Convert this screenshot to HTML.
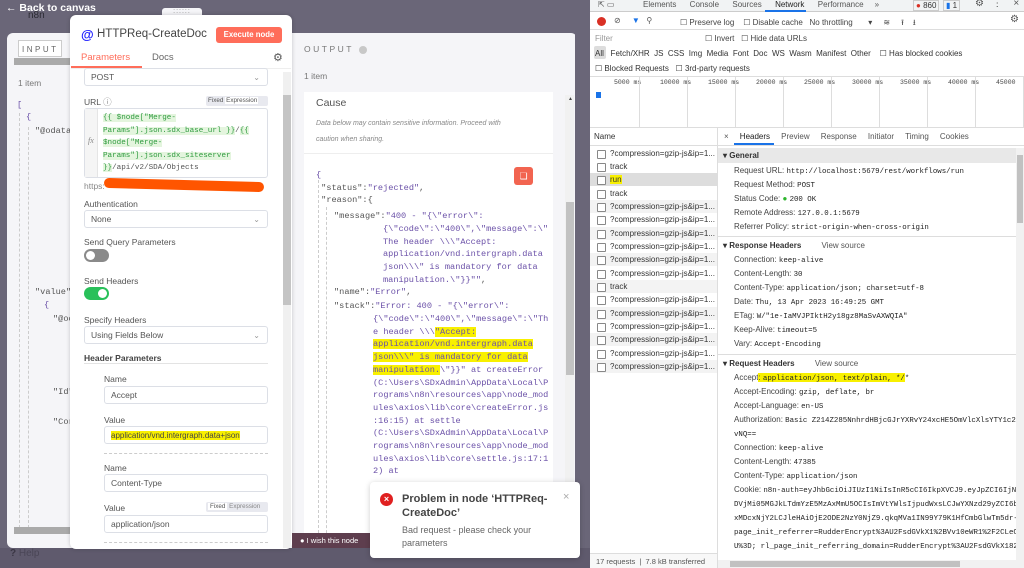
<!DOCTYPE html>
<html><head><meta charset="utf-8"><style>
*{margin:0;padding:0;box-sizing:border-box}
html,body{width:1024px;height:568px;overflow:hidden}
body{position:relative;background:#6a6678;font-family:"Liberation Sans",sans-serif}
.a{position:absolute;white-space:nowrap}
.m{font-family:"Liberation Mono",monospace}
.lbl{font-size:8.5px;color:#555}
.inp{position:absolute;background:#fff;border:1px solid #dcdfe6;border-radius:3px;font-size:8.5px;color:#555;padding-left:6px;display:flex;align-items:center}
.chev{position:absolute;right:7px;top:4px;font-size:8px;color:#999}
.code{font-family:"Liberation Mono",monospace;font-size:8.6px;color:#555;position:absolute;white-space:nowrap}
.s{color:#6b51a8}
.hl{background:#f8f000}
.dt{font-size:8px;color:#333;position:absolute;white-space:nowrap}
.dv{font-family:"Liberation Mono",monospace;font-size:7.4px;color:#222}
.ln{height:14px;line-height:14px;white-space:nowrap;overflow:hidden}
.row{position:absolute;left:590px;width:127px;height:13px;font-size:8px;color:#333;padding-left:20px;line-height:13px;white-space:nowrap;overflow:hidden;text-overflow:ellipsis}
.row:before{content:"";position:absolute;left:7px;top:3px;width:7px;height:7px;border:1px solid #888;border-radius:1px;background:#fff}
.alt{background:#f3f3f3}
</style></head><body>
<div class="a" style="left:6px;top:2px;color:#fff;font-size:10.5px;font-weight:bold">&#8592; Back to canvas</div>
<div class="a" style="left:28px;top:10px;color:#2b2b33;font-size:10px">n8n</div>
<div class="a" style="left:7px;top:33px;width:570px;height:515px;background:#f5f5f8;border-radius:6px"></div>
<div class="a" style="left:18px;top:40px;width:44px;height:17px;border:1px solid #ccc;background:#fff;font-size:8px;letter-spacing:2.5px;color:#666;padding:4px 0 0 3px">INPUT</div>
<div class="a" style="left:14px;top:58px;width:60px;height:7px;background:#aaa"></div>
<div class="a" style="left:18px;top:78px;font-size:8.5px;color:#777">1 item</div>
<div class="code s" style="left:17px;top:100px">[</div>
<div class="code s" style="left:26px;top:112px">{</div>
<div class="code" style="left:35px;top:126px">"@odata</div>
<div class="code" style="left:35px;top:287px">"value"</div>
<div class="code s" style="left:44px;top:300px">{</div>
<div class="code" style="left:53px;top:314px">"@oc</div>
<div class="code" style="left:53px;top:387px">"Id"</div>
<div class="code" style="left:53px;top:417px">"Cor</div>
<div class="a" style="left:19px;top:113px;height:420px;border-left:1px dashed #ccc"></div>
<div class="a" style="left:28px;top:127px;height:406px;border-left:1px dashed #ccc"></div>
<div class="a" style="left:14px;top:527px;width:60px;height:7px;background:#aaa"></div>
<div class="a" style="left:0;top:548px;width:590px;height:20px;background:#5f5a6d"></div>
<div class="a" style="left:10px;top:548px;color:#3a3644;font-size:10px;font-weight:bold">? <span style="font-weight:normal;color:#4a4656">Help</span></div>
<div class="a" style="left:162px;top:8px;width:40px;height:12px;background:#f5f5f8;border-radius:3px 3px 0 0;font-size:7px;color:#888;text-align:center;letter-spacing:1px">::::::</div>
<div class="a" style="left:70px;top:15px;width:222px;height:534px;background:#fff;border-radius:6px;box-shadow:0 0 4px rgba(0,0,0,.2)"></div>
<div class="a" style="left:81px;top:27px;color:#1a1aff;font-size:13px;font-weight:bold">@</div>
<div class="a" style="left:97px;top:28px;color:#444;font-size:11.5px">HTTPReq-CreateDoc</div>
<div class="a" style="left:216px;top:27px;width:66px;height:16px;background:#ff6d5a;border-radius:3px;color:#fff;font-size:7.8px;font-weight:bold;text-align:center;line-height:16px">Execute node</div>
<div class="a" style="left:81px;top:52px;color:#ff6d5a;font-size:9.5px">Parameters</div>
<div class="a" style="left:152px;top:52px;color:#666;font-size:9.5px">Docs</div>
<div class="a" style="left:71px;top:66px;width:71px;height:2px;background:#ff6d5a"></div>
<div class="a" style="left:273px;top:51px;color:#555;font-size:11px">&#9881;</div>
<div class="a" style="left:71px;top:68px;width:220px;height:1px;background:#eee"></div>
<div class="a" style="left:283px;top:72px;width:8px;height:476px;background:#f0f0f0"></div>
<div class="a" style="left:283px;top:95px;width:8px;height:210px;background:#c4c4c4"></div>
<div class="inp" style="left:84px;top:68px;width:184px;height:18px">POST<span class="chev">&#8964;</span></div>
<div class="a lbl" style="left:84px;top:96px">URL <span style="color:#888">&#9432;</span></div>
<div class="a" style="left:206px;top:96px;width:62px;height:10px;background:#e8e9ef;border-radius:2px;font-size:6.3px;color:#555;padding:1px 0 0 2px">Fixed <span style="background:#fff;padding:0 1px">Expression</span></div>
<div class="a" style="left:84px;top:108px;width:184px;height:70px;border:1px solid #dcdfe6;border-radius:3px;background:#fff"></div>
<div class="a" style="left:85px;top:109px;width:13px;height:68px;background:#f5f5f5;border-right:1px solid #e5e5e5;font-size:8px;color:#888;font-style:italic;padding:27px 0 0 3px;font-family:'Liberation Serif',serif">fx</div>
<div class="a m" style="left:103px;top:112px;font-size:7.6px;line-height:12.5px;color:#2e9b3e"><span style="background:#e4f5de">{{ $node["Merge-</span><br><span style="background:#e4f5de">Params"].json.sdx_base_url }}</span><span style="color:#555">/</span><span style="background:#e4f5de">{{</span><br><span style="background:#e4f5de">$node["Merge-</span><br><span style="background:#e4f5de">Params"].json.sdx_siteserver</span><br><span style="background:#e4f5de">}}</span><span style="color:#555">/api/v2/SDA/Objects</span></div>
<div class="a lbl" style="left:84px;top:181px;color:#888">https:</div>
<div class="a" style="left:104px;top:180px;width:160px;height:10px;background:#ff5500;border-radius:6px;transform:rotate(1.5deg)"></div>
<div class="a lbl" style="left:84px;top:199px">Authentication</div>
<div class="inp" style="left:84px;top:210px;width:184px;height:18px">None<span class="chev">&#8964;</span></div>
<div class="a lbl" style="left:84px;top:237px">Send Query Parameters</div>
<div class="a" style="left:84px;top:249px;width:25px;height:13px;background:#8a8a8a;border-radius:7px"><div style="position:absolute;left:2px;top:2px;width:9px;height:9px;border-radius:50%;background:#fff"></div></div>
<div class="a lbl" style="left:84px;top:276px">Send Headers</div>
<div class="a" style="left:84px;top:287px;width:25px;height:13px;background:#29c05a;border-radius:7px"><div style="position:absolute;right:2px;top:2px;width:9px;height:9px;border-radius:50%;background:#fff"></div></div>
<div class="a lbl" style="left:84px;top:315px">Specify Headers</div>
<div class="inp" style="left:84px;top:326px;width:184px;height:18px">Using Fields Below<span class="chev">&#8964;</span></div>
<div class="a lbl" style="left:84px;top:353px;font-weight:bold;color:#444">Header Parameters</div>
<div class="a" style="left:84px;top:363px;width:184px;height:1px;background:#e3e3e3"></div>
<div class="a lbl" style="left:104px;top:374px">Name</div>
<div class="inp" style="left:104px;top:386px;width:164px;height:18px">Accept</div>
<div class="a lbl" style="left:104px;top:415px">Value</div>
<div class="inp" style="left:104px;top:426px;width:164px;height:18px"><span class="hl" style="font-size:8px;color:#444">application/vnd.intergraph.data+json</span></div>
<div class="a" style="left:104px;top:453px;width:164px;border-top:1px dashed #ccc"></div>
<div class="a lbl" style="left:104px;top:463px">Name</div>
<div class="inp" style="left:104px;top:474px;width:164px;height:18px">Content-Type</div>
<div class="a lbl" style="left:104px;top:503px">Value</div>
<div class="a" style="left:206px;top:502px;width:62px;height:10px;background:#e8e9ef;border-radius:2px;font-size:6.3px;color:#888;padding:1px 0 0 2px"><span style="background:#fff;color:#555;padding:0 2px">Fixed</span> Expression</div>
<div class="inp" style="left:104px;top:515px;width:164px;height:18px">application/json</div>
<div class="a" style="left:104px;top:542px;width:164px;border-top:1px dashed #ccc"></div>
<div class="a" style="left:304px;top:44px;font-size:8.5px;letter-spacing:2.5px;color:#777">OUTPUT</div>
<div class="a" style="left:359px;top:46px;width:8px;height:8px;border-radius:50%;background:#c8c8c8"></div>
<div class="a" style="left:304px;top:71px;font-size:8.5px;color:#777">1 item</div>
<div class="a" style="left:304px;top:92px;width:249px;height:456px;background:#fff"></div>
<div class="a" style="left:304px;top:153px;width:249px;height:1px;background:#eee"></div>
<div class="a" style="left:316px;top:97px;font-size:10.5px;color:#555">Cause</div>
<div class="a" style="left:316px;top:116px;font-size:7px;color:#888;font-style:italic;line-height:16px">Data below may contain sensitive information. Proceed with<br>caution when sharing.</div>
<div class="a" style="left:514px;top:167px;width:19px;height:18px;background:#f26450;border-radius:3px;color:#fff;font-size:9px;text-align:center;line-height:18px">&#10063;</div>
<div class="a" style="left:565px;top:95px;width:9px;height:453px;background:#f1f1f1"></div>
<div class="a" style="left:566px;top:202px;width:8px;height:173px;background:#c2c2c2"></div>
<div class="a" style="left:568px;top:96px;font-size:5px;color:#444">&#9650;</div>
<div class="a" style="left:318px;top:180px;height:368px;border-left:1px dashed #ccc"></div>
<div class="a" style="left:326px;top:207px;height:341px;border-left:1px dashed #ccc"></div>
<div class="code" style="left:316px;top:169px;line-height:12.7px"><span class="s">{</span><br>&nbsp;"status":<span class="s">"rejected"</span>,<br>&nbsp;"reason":{</div>
<div class="code" style="left:334px;top:210px;line-height:12.7px">"message":<span class="s">"400 - "{\"error\":</span></div>
<div class="code s" style="left:383px;top:223px;line-height:12.7px">{\"code\":\"400\",\"message\":\"<br>The header \\\"Accept:<br>application/vnd.intergraph.data<br>json\\\" is mandatory for data<br>manipulation.\"}}""<span style="color:#555">,</span></div>
<div class="code" style="left:334px;top:286px;line-height:12.7px">"name":<span class="s">"Error"</span>,</div>
<div class="code" style="left:334px;top:300px;line-height:12.7px">"stack":<span class="s">"Error: 400 - "{\"error\":</span></div>
<div class="code s" style="left:373px;top:313px;line-height:12.7px">{\"code\":\"400\",\"message\":\"Th<br>e header \\\<span class="hl">"Accept:</span><br><span class="hl">application/vnd.intergraph.data</span><br><span class="hl">json\\\" is mandatory for data</span><br><span class="hl">manipulation.</span>\"}}" at createError<br>(C:\Users\SDxAdmin\AppData\Local\P<br>rograms\n8n\resources\app\node_mod<br>ules\axios\lib\core\createError.js<br>:16:15) at settle<br>(C:\Users\SDxAdmin\AppData\Local\P<br>rograms\n8n\resources\app\node_mod<br>ules\axios\lib\core\settle.js:17:1<br>2) at</div>
<div class="a" style="left:292px;top:533px;width:80px;height:15px;background:#5e3e4e;color:#fff;font-size:7.5px;padding:3px 0 0 8px">&#9679; I wish this node</div>
<div class="a" style="left:575px;top:33px;width:15px;height:515px;background:#6a6678"></div>
<div class="a" style="left:370px;top:482px;width:210px;height:76px;background:#fff;border-radius:4px;box-shadow:0 1px 6px rgba(0,0,0,.2)"></div>
<div class="a" style="left:380px;top:493px;width:13px;height:13px;border-radius:50%;background:#e02020;color:#fff;font-size:9px;text-align:center;line-height:13px;font-weight:bold">&#215;</div>
<div class="a" style="left:402px;top:492px;font-size:11px;font-weight:bold;color:#444;line-height:14px">Problem in node ‘HTTPReq-<br>CreateDoc’</div>
<div class="a" style="left:402px;top:524px;font-size:9px;color:#666;line-height:13px">Bad request - please check your<br>parameters</div>
<div class="a" style="left:563px;top:491px;font-size:11px;color:#aaa">&#215;</div>
<!-- devtools -->
<div class="a" style="left:590px;top:0;width:434px;height:568px;background:#fff;overflow:hidden"></div>
<div class="a" style="left:590px;top:0;width:434px;height:12px;background:#f1f3f4;border-bottom:1px solid #ccc"></div>
<div class="dt" style="left:598px;top:0;color:#555">&#8689; &#9645;</div>
<div class="dt" style="left:643px;top:0;color:#555">Elements&nbsp;&nbsp;&nbsp;&nbsp;&nbsp; Console&nbsp;&nbsp;&nbsp;&nbsp;&nbsp; Sources&nbsp;&nbsp;&nbsp;&nbsp;&nbsp; <span style="color:#222">Network</span>&nbsp;&nbsp;&nbsp;&nbsp;&nbsp; Performance&nbsp;&nbsp;&nbsp;&nbsp; »</div>
<div class="a" style="left:765px;top:10px;width:41px;height:2px;background:#1a73e8"></div>
<div class="dt" style="left:913px;top:0;border:1px solid #ccc;padding:0 2px"><span style="color:#d93025">&#9679;</span> 860</div>
<div class="dt" style="left:943px;top:0;border:1px solid #ccc;padding:0 2px"><span style="color:#1a73e8">&#9646;</span> 1</div>
<div class="dt" style="left:975px;top:-2px;color:#555;font-size:10px">&#9881;&nbsp;&nbsp; &#8942;&nbsp;&nbsp;&nbsp; &#215;</div>
<div class="a" style="left:590px;top:12px;width:434px;height:18px;border-bottom:1px solid #ddd"></div>
<div class="a" style="left:597px;top:17px;width:9px;height:9px;border-radius:50%;background:#d93025"></div>
<div class="dt" style="left:614px;top:16px;color:#555">&#8856;&nbsp;&nbsp;&nbsp;&nbsp; <span style="color:#1a73e8">&#9660;</span>&nbsp;&nbsp; &#9906;</div>
<div class="dt" style="left:680px;top:17px;color:#444">&#9744; Preserve log&nbsp;&nbsp;&nbsp; &#9744; Disable cache&nbsp;&nbsp; No throttling&nbsp;&nbsp;&nbsp;&nbsp;&nbsp;&nbsp; ▾&nbsp;&nbsp;&nbsp;&nbsp; ≋&nbsp;&nbsp;&nbsp;&nbsp; ⭱&nbsp;&nbsp;&nbsp; ⭳</div>
<div class="dt" style="left:1010px;top:14px;color:#555;font-size:10px">&#9881;</div>
<div class="dt" style="left:595px;top:34px;color:#999">Filter</div>
<div class="dt" style="left:705px;top:34px;color:#444">&#9744; Invert&nbsp;&nbsp; &#9744; Hide data URLs</div>
<div class="a" style="left:594px;top:46px;width:12px;height:13px;background:#ddd;border-radius:2px"></div>
<div class="dt" style="left:595px;top:49px;color:#333">All&nbsp;&nbsp; Fetch/XHR&nbsp;&nbsp;JS&nbsp;&nbsp;CSS&nbsp;&nbsp;Img&nbsp;&nbsp;Media&nbsp;&nbsp;Font&nbsp;&nbsp;Doc&nbsp;&nbsp;WS&nbsp;&nbsp;Wasm&nbsp;&nbsp;Manifest&nbsp;&nbsp;Other&nbsp;&nbsp;&nbsp; &#9744; Has blocked cookies</div>
<div class="dt" style="left:595px;top:64px;color:#333">&#9744; Blocked Requests&nbsp;&nbsp; &#9744; 3rd-party requests</div>
<div class="a" style="left:590px;top:76px;width:434px;height:52px;border-top:1px solid #ddd;border-bottom:1px solid #ddd"></div>
<div class="a m" style="left:590px;top:79px;width:434px;font-size:6.5px;color:#444">
<span class="a" style="left:24px">5000 ms</span><span class="a" style="left:70px">10000 ms</span><span class="a" style="left:118px">15000 ms</span><span class="a" style="left:166px">20000 ms</span><span class="a" style="left:214px">25000 ms</span><span class="a" style="left:262px">30000 ms</span><span class="a" style="left:310px">35000 ms</span><span class="a" style="left:358px">40000 ms</span><span class="a" style="left:406px">45000</span></div>
<div class="a" style="left:639px;top:77px;width:1px;height:50px;background:#ddd;box-shadow:48px 0 #ddd,96px 0 #ddd,144px 0 #ddd,192px 0 #ddd,240px 0 #ddd,288px 0 #ddd,336px 0 #ddd,384px 0 #ddd"></div>
<div class="a" style="left:596px;top:92px;width:5px;height:6px;background:#1a73e8"></div>
<div class="a" style="left:717px;top:128px;width:1px;height:440px;background:#ddd"></div>
<div class="a" style="left:590px;top:145px;width:434px;height:1px;background:#ddd"></div>
<div class="dt" style="left:594px;top:132px">Name</div>
<div class="dt" style="left:724px;top:132px;color:#555">&#215;&nbsp;&nbsp;&nbsp;&nbsp; <span style="color:#222">Headers</span>&nbsp;&nbsp;&nbsp;&nbsp; Preview&nbsp;&nbsp;&nbsp;&nbsp; Response&nbsp;&nbsp;&nbsp;&nbsp; Initiator&nbsp;&nbsp;&nbsp;&nbsp; Timing&nbsp;&nbsp;&nbsp;&nbsp; Cookies</div>
<div class="a" style="left:734px;top:143px;width:40px;height:2px;background:#1a73e8"></div>
<div class="row" style="top:147px">?compression=gzip-js&amp;ip=1...</div>
<div class="row" style="top:160px">track</div>
<div class="row" style="top:173px;background:#ddd"><span class="hl">run</span></div>
<div class="row" style="top:187px">track</div>
<div class="row alt" style="top:200px">?compression=gzip-js&amp;ip=1...</div>
<div class="row" style="top:213px">?compression=gzip-js&amp;ip=1...</div>
<div class="row alt" style="top:227px">?compression=gzip-js&amp;ip=1...</div>
<div class="row" style="top:240px">?compression=gzip-js&amp;ip=1...</div>
<div class="row alt" style="top:253px">?compression=gzip-js&amp;ip=1...</div>
<div class="row" style="top:267px">?compression=gzip-js&amp;ip=1...</div>
<div class="row alt" style="top:280px">track</div>
<div class="row" style="top:293px">?compression=gzip-js&amp;ip=1...</div>
<div class="row alt" style="top:307px">?compression=gzip-js&amp;ip=1...</div>
<div class="row" style="top:320px">?compression=gzip-js&amp;ip=1...</div>
<div class="row alt" style="top:333px">?compression=gzip-js&amp;ip=1...</div>
<div class="row" style="top:347px">?compression=gzip-js&amp;ip=1...</div>
<div class="row alt" style="top:360px">?compression=gzip-js&amp;ip=1...</div>
<div class="a" style="left:590px;top:553px;width:127px;height:15px;border-top:1px solid #ddd;background:#f8f8f8;overflow:hidden"></div>
<div class="dt" style="left:596px;top:557px;color:#555;font-size:7.5px">17 requests&nbsp; | &nbsp;7.8 kB transferred</div>
<div class="a" style="left:718px;top:148px;width:298px;height:15px;background:#e8e8e8"></div>
<div class="a" style="left:1016px;top:148px;width:8px;height:420px;background:#f1f1f1"></div>
<div class="a" style="left:1017px;top:155px;width:6px;height:68px;background:#c1c1c1"></div>
<div class="dt" style="left:723px;top:151px;font-weight:bold">▾ General</div>
<div class="a" style="left:734px;top:164px;width:282px;overflow:hidden;font-size:8px;color:#444">
<div class="ln">Request URL: <span class="dv">http://localhost:5679/rest/workflows/run</span></div>
<div class="ln">Request Method: <span class="dv">POST</span></div>
<div class="ln">Status Code: <span style="color:#2db52d">&#9679;</span> <span class="dv">200 OK</span></div>
<div class="ln">Remote Address: <span class="dv">127.0.0.1:5679</span></div>
<div class="ln">Referrer Policy: <span class="dv">strict-origin-when-cross-origin</span></div>
</div>
<div class="a" style="left:718px;top:236px;width:298px;height:1px;background:#ddd"></div>
<div class="dt" style="left:723px;top:241px;font-weight:bold">▾ Response Headers <span style="font-weight:normal;color:#555;margin-left:18px">View source</span></div>
<div class="a" style="left:734px;top:253px;width:282px;overflow:hidden;font-size:8px;color:#444">
<div class="ln">Connection: <span class="dv">keep-alive</span></div>
<div class="ln">Content-Length: <span class="dv">30</span></div>
<div class="ln">Content-Type: <span class="dv">application/json; charset=utf-8</span></div>
<div class="ln">Date: <span class="dv">Thu, 13 Apr 2023 16:49:25 GMT</span></div>
<div class="ln">ETag: <span class="dv">W/"1e-IaMVJPIktH2y18gz8MaSvAXWQIA"</span></div>
<div class="ln">Keep-Alive: <span class="dv">timeout=5</span></div>
<div class="ln">Vary: <span class="dv">Accept-Encoding</span></div>
</div>
<div class="a" style="left:718px;top:354px;width:298px;height:1px;background:#ddd"></div>
<div class="dt" style="left:723px;top:359px;font-weight:bold">▾ Request Headers <span style="font-weight:normal;color:#555;margin-left:18px">View source</span></div>
<div class="a" style="left:734px;top:371px;width:282px;height:190px;overflow:hidden;font-size:8px;color:#444">
<div class="ln">Accept<span class="hl">: <span class="dv">application/json, text/plain, */</span></span><span class="dv">*</span></div>
<div class="ln">Accept-Encoding: <span class="dv">gzip, deflate, br</span></div>
<div class="ln">Accept-Language: <span class="dv">en-US</span></div>
<div class="ln">Authorization: <span class="dv">Basic Z214Z285NnhrdHBjcGJrYXRvY24xcHE5OmVlcXlsYTY1c2p</span></div>
<div class="ln"><span class="dv">vNQ==</span></div>
<div class="ln">Connection: <span class="dv">keep-alive</span></div>
<div class="ln">Content-Length: <span class="dv">47385</span></div>
<div class="ln">Content-Type: <span class="dv">application/json</span></div>
<div class="ln">Cookie: <span class="dv">n8n-auth=eyJhbGciOiJIUzI1NiIsInR5cCI6IkpXVCJ9.eyJpZCI6IjNkN</span></div>
<div class="ln"><span class="dv">DVjMi05MGJkLTdmYzE5MzAxMmU5OCIsImVtYWlsIjpudWxsLCJwYXNzd29yZCI6bnVs</span></div>
<div class="ln"><span class="dv">xMDcxNjY2LCJleHAiOjE2ODE2NzY0NjZ9.qkqMVa1IN99Y79K1HfCmbGlwTm5dr-Typ</span></div>
<div class="ln"><span class="dv">page_init_referrer=RudderEncrypt%3AU2FsdGVkX1%2BVv10eWR1%2F2CLeCLbr</span></div>
<div class="ln"><span class="dv">U%3D; rl_page_init_referring_domain=RudderEncrypt%3AU2FsdGVkX1823Ka</span></div>
</div>
<div class="a" style="left:718px;top:560px;width:298px;height:8px;background:#f1f1f1"></div>
<div class="a" style="left:730px;top:561px;width:230px;height:6px;background:#c1c1c1"></div>
</body></html>
